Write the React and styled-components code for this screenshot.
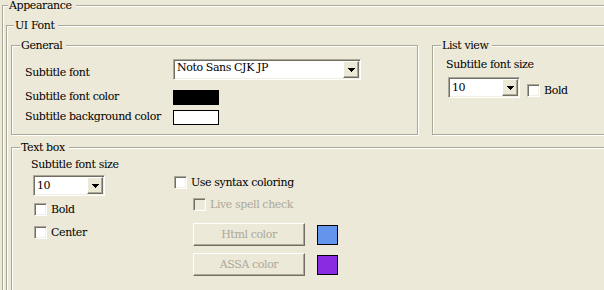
import React from 'react';
import styled, { createGlobalStyle } from 'styled-components';

const GlobalStyle = createGlobalStyle`
  * { box-sizing: border-box; }
  body {
    margin: 0;
    background: #ece9d8;
    font-family: "DejaVu Serif", serif;
    font-size: 11px;
    letter-spacing: -0.4px;
    color: #000;
  }
`;

const Page = styled.div`
  width: 604px;
  height: 290px;
  overflow: hidden;
  padding-left: 2px;
  background: #ece9d8;
`;

// etched group box: gray line with a white line one pixel down-right
const Group = styled.fieldset`
  margin: ${p => p.$mt || 0}px 0 0;
  min-width: 0;
  width: ${p => (p.$w ? `${p.$w}px` : 'auto')};
  flex: ${p => (p.$grow ? 1 : 'none')};
  padding: ${p => p.$pad};
  border: 1px solid #aca899;
  box-shadow: 1px 1px 0 #fff, inset 1px 1px 0 #fff;
`;

const Title = styled.legend`
  margin-left: ${p => p.$x}px;
  padding: 0 4px 0 1px;
  line-height: 11px;
  background: #ece9d8;
`;

const GroupRow = styled.div`
  display: flex;
  gap: 14px;
`;

const FieldRow = styled.div`
  display: flex;
  align-items: flex-start;
  margin-top: ${p => p.$mt || 0}px;
`;

const Label = styled.div`
  width: ${p => (p.$w ? `${p.$w}px` : 'auto')};
  padding-top: ${p => p.$pt || 0}px;
  line-height: 13px;
  white-space: nowrap;
`;

const Swatch = styled.div`
  width: ${p => p.$w}px;
  height: ${p => p.$h}px;
  margin-top: ${p => p.$mt || 0}px;
  border: 1px solid #000;
  background: ${p => p.$color};
`;

const Combo = styled.div`
  display: flex;
  width: ${p => p.$w}px;
  height: 21px;
  margin: ${p => p.$mt || 0}px 0 0 ${p => p.$ml || 0}px;
  padding: 1px;
  background: #fff;
  border: 1px solid;
  border-color: #aca899 #fff #fff #aca899;
  box-shadow: inset 1px 1px 0 #716f64, inset -1px -1px 0 #f1efe2;
`;

const ComboValue = styled.span`
  flex: 1;
  padding: ${p => p.$top || 0}px 0 0 2px;
  line-height: 13px;
  white-space: nowrap;
  overflow: hidden;
`;

const DropButton = styled.span`
  width: 16px;
  display: flex;
  align-items: center;
  justify-content: center;
  background: #ece9d8;
  border: 1px solid;
  border-color: #fff #716f64 #716f64 #fff;
  box-shadow: inset -1px -1px 0 #aca899;
`;

const Arrow = () => (
  <svg width="7" height="4" viewBox="0 0 7 4" shapeRendering="crispEdges">
    <path d="M0 0h7v1H6v1H5v1H4v1H3V3H2V2H1V1H0z" fill="#000" />
  </svg>
);

const ComboBox = ({ value, top, ...rest }) => (
  <Combo {...rest}>
    <ComboValue $top={top}>{value}</ComboValue>
    <DropButton>
      <Arrow />
    </DropButton>
  </Combo>
);

const CheckRow = styled.div`
  display: flex;
  align-items: center;
  gap: 4px;
  height: 13px;
  margin: ${p => p.$mt || 0}px 0 0 ${p => p.$ml || 0}px;
  line-height: 13px;
  white-space: nowrap;
  color: ${p => (p.$disabled ? '#aca899' : '#000')};
`;

const Box = styled.span`
  width: 13px;
  height: 13px;
  flex: none;
  background: ${p => (p.$disabled ? '#ece9d8' : '#fff')};
  border: 1px solid;
  border-color: #aca899 #fff #fff #aca899;
  box-shadow: inset 1px 1px 0 #716f64, inset -1px -1px 0 #f1efe2;
`;

const CheckBox = ({ label, disabled, ...rest }) => (
  <CheckRow $disabled={disabled} {...rest}>
    <Box $disabled={disabled} />
    {label}
  </CheckRow>
);

const Columns = styled.div`
  display: flex;
`;

const Column = styled.div`
  display: flex;
  flex-direction: column;
  align-items: flex-start;
  width: ${p => (p.$w ? `${p.$w}px` : 'auto')};
  margin-top: ${p => p.$mt || 0}px;
`;

const ButtonRow = styled.div`
  display: flex;
  align-items: flex-start;
  gap: 12px;
  margin: ${p => p.$mt || 0}px 0 0 ${p => p.$ml || 0}px;
`;

const Button = styled.button`
  width: 112px;
  height: 23px;
  padding: 0;
  font: inherit;
  letter-spacing: inherit;
  line-height: 13px;
  color: #aca899;
  background: #ece9d8;
  border: 1px solid;
  border-color: #fff #716f64 #716f64 #fff;
  box-shadow: inset -1px -1px 0 #aca899;
`;

export default function App() {
  return (
    <Page>
      <GlobalStyle />
      <Group $w={680} $pad="9px 0 0 3px">
        <Title $x={2}>Appearance</Title>
        <Group $pad="9px 0 0 4px">
          <Title $x={3}>UI Font</Title>
          <GroupRow>
            <Group $w={407} $pad="8px 0 9px 13px">
              <Title $x={-5}>General</Title>
              <FieldRow>
                <Label $w={148} $pt={7}>Subtitle font</Label>
                <ComboBox $w={188} value="Noto Sans CJK JP" top={0} />
              </FieldRow>
              <FieldRow $mt={10}>
                <Label $w={148}>Subtitle font color</Label>
                <Swatch $w={46} $h={15} $color="#000" />
              </FieldRow>
              <FieldRow $mt={5}>
                <Label $w={148}>Subtitle background color</Label>
                <Swatch $w={46} $h={15} $color="#fff" />
              </FieldRow>
            </Group>
            <Group $grow $pad="7px 0 0 13px">
              <Title $x={-5}>List view</Title>
              <Label>Subtitle font size</Label>
              <FieldRow $mt={6}>
                <ComboBox $w={72} $ml={2} value="10" top={2} />
                <CheckBox $ml={7} $mt={7} label="Bold" />
              </FieldRow>
            </Group>
          </GroupRow>
          <Group $mt={7} $pad="5px 0 40px 19px">
            <Title $x={-11}>Text box</Title>
            <Columns>
              <Column $w={143}>
                <Label>Subtitle font size</Label>
                <ComboBox $w={72} $ml={2} $mt={4} value="10" top={2} />
                <CheckBox $ml={3} $mt={7} label="Bold" />
                <CheckBox $ml={3} $mt={10} label="Center" />
              </Column>
              <Column $mt={18}>
                <CheckBox label="Use syntax coloring" />
                <CheckBox $ml={19} $mt={9} disabled label="Live spell check" />
                <ButtonRow $ml={19} $mt={12}>
                  <Button disabled>Html color</Button>
                  <Swatch $w={21} $h={20} $mt={2} $color="#6495ed" />
                </ButtonRow>
                <ButtonRow $ml={19} $mt={7}>
                  <Button disabled>ASSA color</Button>
                  <Swatch $w={21} $h={20} $mt={2} $color="#8a2be2" />
                </ButtonRow>
              </Column>
            </Columns>
          </Group>
        </Group>
      </Group>
    </Page>
  );
}
